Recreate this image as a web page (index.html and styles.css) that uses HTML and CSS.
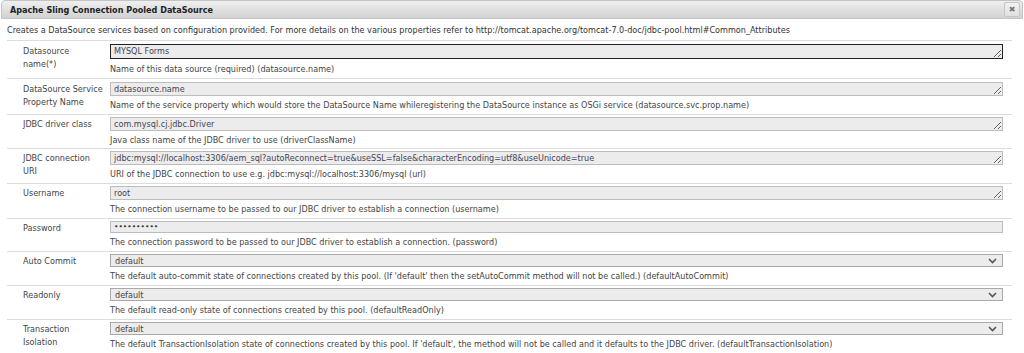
FILE: index.html
```html
<!DOCTYPE html>
<html>
<head>
<meta charset="utf-8">
<link rel="stylesheet" href="styles.css">
</head>
<body>
<div class="dialog">
  <div class="titlebar">
    <span class="title">Apache Sling Connection Pooled DataSource</span>
    <span class="close">&#x2716;</span>
  </div>
  <div class="content">
    <p class="desc">Creates a DataSource services based on configuration provided. For more details on the various properties refer to http://tomcat.apache.org/tomcat-7.0-doc/jdbc-pool.html#Common_Attributes</p>
    <div class="props">
      <div class="row r1">
        <div class="lbl">Datasource<br>name(*)</div>
        <div class="val"><textarea class="field focus" rows="1">MYSQL Forms</textarea><div class="help">Name of this data source (required) (datasource.name)</div></div>
      </div>
      <div class="row r2">
        <div class="lbl">DataSource Service Property Name</div>
        <div class="val"><textarea class="field" rows="1">datasource.name</textarea><div class="help">Name of the service property which would store the DataSource Name whileregistering the DataSource instance as OSGi service (datasource.svc.prop.name)</div></div>
      </div>
      <div class="row r3">
        <div class="lbl">JDBC driver class</div>
        <div class="val"><textarea class="field" rows="1">com.mysql.cj.jdbc.Driver</textarea><div class="help">Java class name of the JDBC driver to use (driverClassName)</div></div>
      </div>
      <div class="row">
        <div class="lbl">JDBC connection<br>URI</div>
        <div class="val"><textarea class="field" rows="1">jdbc:mysql://localhost:3306/aem_sql?autoReconnect=true&amp;useSSL=false&amp;characterEncoding=utf8&amp;useUnicode=true</textarea><div class="help">URI of the JDBC connection to use e.g. jdbc:mysql://localhost:3306/mysql (url)</div></div>
      </div>
      <div class="row">
        <div class="lbl">Username</div>
        <div class="val"><textarea class="field" rows="1">root</textarea><div class="help">The connection username to be passed to our JDBC driver to establish a connection (username)</div></div>
      </div>
      <div class="row">
        <div class="lbl">Password</div>
        <div class="val"><input class="field pwd" type="password" value="xxxxxxxxxx"><div class="help">The connection password to be passed to our JDBC driver to establish a connection. (password)</div></div>
      </div>
      <div class="row">
        <div class="lbl">Auto Commit</div>
        <div class="val"><div class="select"><span>default</span><svg class="chev" width="9" height="6" viewBox="0 0 9 6"><path d="M1 1 L4.5 4.5 L8 1" fill="none" stroke="#555" stroke-width="1.6"/></svg></div><div class="help">The default auto-commit state of connections created by this pool. (If 'default' then the setAutoCommit method will not be called.) (defaultAutoCommit)</div></div>
      </div>
      <div class="row">
        <div class="lbl">Readonly</div>
        <div class="val"><div class="select"><span>default</span><svg class="chev" width="9" height="6" viewBox="0 0 9 6"><path d="M1 1 L4.5 4.5 L8 1" fill="none" stroke="#555" stroke-width="1.6"/></svg></div><div class="help">The default read-only state of connections created by this pool. (defaultReadOnly)</div></div>
      </div>
      <div class="row">
        <div class="lbl">Transaction<br>Isolation</div>
        <div class="val"><div class="select"><span>default</span><svg class="chev" width="9" height="6" viewBox="0 0 9 6"><path d="M1 1 L4.5 4.5 L8 1" fill="none" stroke="#555" stroke-width="1.6"/></svg></div><div class="help">The default TransactionIsolation state of connections created by this pool. If 'default', the method will not be called and it defaults to the JDBC driver. (defaultTransactionIsolation)</div></div>
      </div>
    </div>
  </div>
</div>
</body>
</html>
```
FILE: styles.css
```css
html, body {
  margin: 0;
  padding: 0;
  background: #fff;
}
body {
  font-family: "DejaVu Sans", Verdana, sans-serif;
  font-size: 8.1px;
  color: #333;
  overflow: hidden;
}
.dialog {
  width: 1024px;
}
.titlebar {
  box-sizing: border-box;
  height: 19px;
  margin: 0 1px;
  border: 1px solid #c4c4c4;
  border-radius: 4px 4px 0 0;
  background: linear-gradient(#efefef, #d2d2d2);
  display: flex;
  align-items: center;
  justify-content: space-between;
  padding: 0 2px 0 8px;
}
.title {
  font-weight: bold;
  color: #222;
}
.close {
  box-sizing: border-box;
  width: 16px;
  height: 15px;
  border: 1px solid #c6c6c6;
  border-radius: 2px;
  background: linear-gradient(#f2f2f2, #e0e0e0);
  color: #777;
  font-size: 8px;
  display: flex;
  align-items: center;
  justify-content: center;
}
.content {
  padding: 0 12px 0 7px;
}
.desc {
  margin: 0;
  padding: 5px 0 0;
  height: 16px;
  line-height: 12px;
  border-bottom: 1px solid #dcdcdc;
  color: #333;
}
.props {
  width: 1005px;
}
.row {
  display: grid;
  grid-template-columns: 103px 1fr;
  border-bottom: 1px solid #dcdcdc;
}
.val {
  padding: 2px 0 3px;
}
.r1 .val,
.r2 .val {
  padding-top: 3px;
}
.r1 .help {
  margin-top: 4px;
}
.r3 .val {
  padding-bottom: 2px;
}
.lbl {
  padding: 3px 0 0 16px;
  line-height: 13px;
  color: #444;
}
.r1 .lbl,
.r2 .lbl {
  padding-top: 4px;
}
.field {
  display: block;
  box-sizing: border-box;
  width: 893px;
  height: 14px;
  margin: 0;
  padding: 0 3px;
  border: 1px solid #bcbcbc;
  background: #ececec;
  font-family: "DejaVu Sans", Verdana, sans-serif;
  font-size: 8.1px;
  line-height: 12px;
  color: #445;
  resize: vertical;
  overflow: hidden;
  white-space: nowrap;
}
.field.focus {
  border: 1px solid #222;
  height: 15px;
  outline: none;
}
.field.pwd {
  height: 12px;
  font-size: 7.5px;
  color: #333;
}
.help {
  margin-top: 3px;
  line-height: 12px;
  color: #444;
}
.select {
  box-sizing: border-box;
  width: 893px;
  height: 13px;
  border: 1px solid #a9a9a9;
  background: #ececec;
  display: flex;
  align-items: center;
  justify-content: space-between;
  padding: 0 5px 0 4px;
  color: #444;
}
```
